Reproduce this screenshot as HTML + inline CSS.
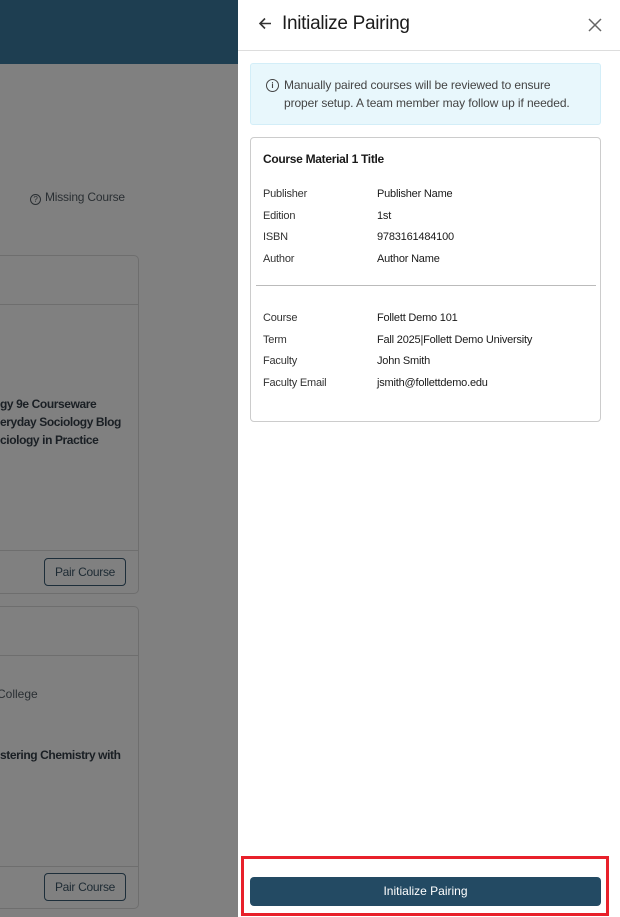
<!DOCTYPE html>
<html><head><style>
*{margin:0;padding:0;box-sizing:border-box}
body{width:620px;height:917px;overflow:hidden;background:#808080;font-family:"Liberation Sans",sans-serif;position:relative;color:#222}
.a{position:absolute}
.top{left:0;top:0;width:238px;height:64px;background:#1e3e51}
.card{border:1px solid #6e6e6e;border-left:none;border-radius:0 5px 5px 0;left:-5px;width:144px}
.hl{height:1px;background:#6e6e6e;left:0;width:138px}
.btn{border:1px solid #1d2e3a;border-radius:4px;font-size:12px;color:#1d2a33;text-align:center;line-height:26px;width:82px;height:28px;left:44px;letter-spacing:-0.3px}
.bt{font-size:12px;font-weight:bold;color:#1a1f24;white-space:nowrap;letter-spacing:-0.4px;left:0}
.panel{left:238px;top:0;width:382px;height:917px;background:#fff}
.lbl{font-size:11px;color:#333;letter-spacing:-0.2px}
</style></head><body>
<div class="a top"></div>
<div class="a" style="left:30px;top:190px;font-size:12px;color:#2a2f33;white-space:nowrap;letter-spacing:-0.2px"><span style="display:inline-block;width:11px;height:11px;border:1.3px solid #2a2f33;border-radius:50%;font-size:8px;text-align:center;line-height:9px;vertical-align:-1px;margin-right:4px">?</span>Missing Course</div>
<div class="a card" style="top:255px;height:339px"></div>
<div class="a hl" style="top:304px"></div>
<div class="a hl" style="top:550px"></div>
<div class="a bt" style="top:397px">gy 9e Courseware</div>
<div class="a bt" style="top:415px">eryday Sociology Blog</div>
<div class="a bt" style="top:433px">ciology in Practice</div>
<div class="a btn" style="top:558px">Pair Course</div>
<div class="a card" style="top:606px;height:303px"></div>
<div class="a hl" style="top:655px"></div>
<div class="a hl" style="top:866px"></div>
<div class="a" style="top:687px;left:-3px;font-size:12px;color:#2a2f33">College</div>
<div class="a bt" style="top:748px">stering Chemistry with</div>
<div class="a btn" style="top:873px">Pair Course</div>

<div class="a panel">
 <svg class="a" style="left:20px;top:16px" width="15" height="15" viewBox="0 0 15 15"><path d="M13 7.5H2M7 2.5L2 7.5 7 12.5" fill="none" stroke="#333" stroke-width="1.6"/></svg>
 <div class="a" style="left:44px;top:13px;font-size:19px;color:#1c1c1c;letter-spacing:-0.3px">Initialize Pairing</div>
 <svg class="a" style="left:350px;top:18px" width="14" height="14" viewBox="0 0 14 14"><path d="M1 1L13 13M13 1L1 13" stroke="#666" stroke-width="1.5"/></svg>
 <div class="a" style="left:0;top:50px;width:382px;height:1px;background:#ddd"></div>
 <div class="a" style="left:12px;top:63px;width:351px;height:62px;background:#e8f7fc;border:1px solid #d3eef8;border-radius:3px"></div>
 <div class="a" style="left:28px;top:79px;width:13px;height:13px;border:1.3px solid #444;border-radius:50%;font-size:8px;font-weight:bold;text-align:center;line-height:11px;color:#444">i</div>
 <div class="a" style="left:46px;top:76px;font-size:12px;line-height:18px;color:#444;width:300px;letter-spacing:-0.1px">Manually paired courses will be reviewed to ensure proper setup. A team member may follow up if needed.</div>
 <div class="a" style="left:12px;top:137px;width:351px;height:285px;border:1px solid #ccc;border-radius:4px"></div>
 <div class="a" style="left:25px;top:152px;font-size:12px;font-weight:bold;color:#1a1a1a;letter-spacing:-0.3px">Course Material 1 Title</div>
 <div class="a lbl" style="left:25px;top:184px;line-height:21.7px">Publisher<br>Edition<br>ISBN<br>Author</div>
 <div class="a lbl" style="left:139px;top:184px;line-height:21.7px;color:#1a1a1a">Publisher Name<br>1st<br>9783161484100<br>Author Name</div>
 <div class="a" style="left:18px;top:285px;width:340px;height:1px;background:#bbb"></div>
 <div class="a lbl" style="left:25px;top:308px;line-height:21.7px">Course<br>Term<br>Faculty<br>Faculty Email</div>
 <div class="a lbl" style="left:139px;top:308px;line-height:21.7px;color:#1a1a1a">Follett Demo 101<br>Fall 2025|Follett Demo University<br>John Smith<br>jsmith@follettdemo.edu</div>
 <div class="a" style="left:3px;top:856px;width:368px;height:60px;border:3px solid #e8202a"></div>
 <div class="a" style="left:12px;top:877px;width:351px;height:29px;background:#234a63;border-radius:4px;color:#fff;font-size:12px;text-align:center;line-height:29px">Initialize Pairing</div>
</div>
</body></html>
